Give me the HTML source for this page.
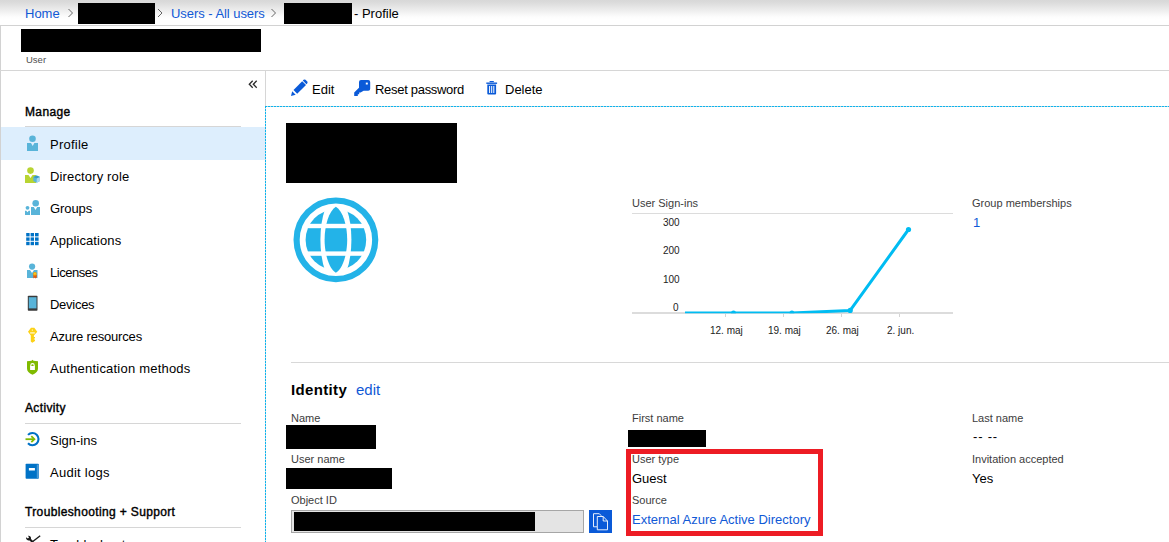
<!DOCTYPE html>
<html><head><meta charset="utf-8">
<style>
*{margin:0;padding:0;box-sizing:border-box}
html,body{width:1169px;height:542px;overflow:hidden;background:#fff;font-family:"Liberation Sans",sans-serif;color:#000}
.abs{position:absolute}
svg{position:absolute;overflow:visible}
.blk{position:absolute;background:#000}
.bc{position:absolute;top:0;left:0;width:1169px;height:25px;background:linear-gradient(#d8d8d8 0px,#dadada 2px,#fdfdfd 17px,#fff 20px)}
.t13{font-size:13px;white-space:nowrap;position:absolute;line-height:16px;color:#000}
.hl{position:absolute;height:1px;background:#d6d6d6}
.vl{position:absolute;width:1px;background:#d6d6d6}
.nav{position:absolute;left:50px;font-size:13px;line-height:16px;white-space:nowrap;color:#000}
.sec{position:absolute;left:25px;font-size:12px;font-weight:normal;-webkit-text-stroke:0.4px #000;letter-spacing:0.36px;line-height:16px;white-space:nowrap;color:#000}
.lbl{position:absolute;font-size:11px;line-height:14px;white-space:nowrap;color:#3c3c3c}
.val{position:absolute;font-size:13px;line-height:16px;white-space:nowrap;color:#000}
.ax{position:absolute;font-size:10px;line-height:12px;white-space:nowrap;color:#222}
.lk{color:#1059d6 !important}
</style></head><body>
<!-- breadcrumb -->
<div class="bc"></div>
<div class="hl" style="left:0;top:25px;width:1169px;background:#d2d2d2"></div>
<div class="t13 lk" style="left:25px;top:6px">Home</div>
<svg style="left:0;top:0" width="1" height="1"><path d="M68.5 9 L72.5 13 L68.5 17 M158 9 L162 13 L158 17 M271.5 9 L275.5 13 L271.5 17" fill="none" stroke="#555" stroke-width="0.9"/></svg>
<div class="blk" style="left:78px;top:3px;width:77px;height:21px"></div>
<div class="t13 lk" style="left:171px;top:6px;letter-spacing:-0.05px">Users - All users</div>
<div class="blk" style="left:284px;top:3px;width:68px;height:21px"></div>
<div class="t13" style="left:354px;top:6px">- Profile</div>

<!-- header -->
<div class="vl" style="left:0;top:25px;height:517px;background:#d2d2d2"></div>
<div class="blk" style="left:21px;top:29px;width:240px;height:23px"></div>
<div class="abs" style="left:26px;top:54px;font-size:9.5px;line-height:11px;color:#505050">User</div>
<div class="hl" style="left:0;top:70px;width:1169px"></div>

<!-- sidebar -->
<div class="vl" style="left:265px;top:70px;height:36px"></div>
<svg style="left:0;top:0" width="1" height="1"><path d="M252.7 80.8 L249.3 84.2 L252.7 87.7 M256.7 80.8 L253.3 84.2 L256.7 87.7" fill="none" stroke="#2a2a2a" stroke-width="1.3"/></svg>
<div class="sec" style="top:104px">Manage</div>
<div class="hl" style="left:25px;top:126px;width:216px"></div>
<div class="abs" style="left:1px;top:127px;width:264px;height:33px;background:#ddeefd"></div>
<!-- icons -->
<svg style="left:0;top:0" width="1" height="1">
 <!-- profile -->
 <circle cx="32.5" cy="138.8" r="3.3" fill="#59b4d9"/>
 <path d="M27 143 H31 L32.7 146 L34.4 143 H38 V151 H27 Z" fill="#59b4d9"/>
 <!-- directory role -->
 <circle cx="30.5" cy="170.6" r="3.3" fill="#b8d432"/>
 <path d="M25 175 H28.5 L30.5 178 L32.5 175 H36 V183 H25 Z" fill="#b8d432"/>
 <path d="M33.3 177 L36.7 175.5 L40 177 V181 L36.7 182.7 L33.3 181 Z" fill="#59b4d9"/>
 <path d="M33.3 177 L36.7 175.5 L40 177 L36.7 178.6 Z" fill="#3999c6"/>
 <path d="M36.7 178.6 L40 177 V181 L36.7 182.7 Z" fill="#a8d8f0"/>
 <!-- groups -->
 <circle cx="35.7" cy="203.2" r="3.3" fill="#59b4d9"/>
 <path d="M31 207 H33.8 L35.5 210 L37.2 207 H40 V215 H31 Z" fill="#59b4d9"/>
 <circle cx="27.5" cy="207.8" r="1.9" fill="#59b4d9"/>
 <path d="M25 210.8 H26.3 L27.5 212.3 L28.7 210.8 H30 V215 H25 Z" fill="#59b4d9"/>
 <!-- applications -->
 <g fill="#0072c6">
  <rect x="26.2" y="233" width="3.4" height="3.4"/><rect x="30.6" y="233" width="3.4" height="3.4"/><rect x="35" y="233" width="3.6" height="3.4"/>
  <rect x="26.2" y="237.4" width="3.4" height="3.4"/><rect x="30.6" y="237.4" width="3.4" height="3.4"/><rect x="35" y="237.4" width="3.6" height="3.4"/>
  <rect x="26.2" y="241.8" width="3.4" height="3.4"/><rect x="30.6" y="241.8" width="3.4" height="3.4"/><rect x="35" y="241.8" width="3.6" height="3.4"/>
 </g>
 <!-- licenses -->
 <circle cx="32.1" cy="266.6" r="3.1" fill="#59b4d9"/>
 <path d="M27 270 H30 L32 273 L34 270 H37.5 V278 H27 Z" fill="#59b4d9"/>
 <path d="M33.3 275 L33.3 278.5 L34.6 277.5 L35.6 278.5 L36.8 277.5 V275 Z" fill="#e8590c"/>
 <circle cx="34.9" cy="273.8" r="1.9" fill="#f5a000"/>
 <circle cx="34.9" cy="273.8" r="1" fill="#ffc820"/>
 <!-- devices -->
 <rect x="27.8" y="295.8" width="9.7" height="15" rx="0.8" fill="#3a3a3a"/>
 <rect x="28.8" y="297.2" width="7.7" height="11.2" fill="#59b4d9"/>
 <!-- azure resources key -->
 <path d="M31 327.8 H34.3 L37.3 331.8 L33.9 335.5 V337 H35 V338.5 H33.9 V339.5 H35 V341 L32.3 342.8 L30.8 341.5 V335.5 L28 331.8 Z" fill="#fcd116"/>
 <rect x="30.1" y="332.2" width="4.7" height="1.4" fill="#fff6c0"/>
 <rect x="31.8" y="329.4" width="1" height="1.4" fill="#fff6c0"/>
 <!-- auth methods shield -->
 <path d="M32.5 359.8 L33.5 360.8 L38 361.3 V368.5 Q38 372.5 32.5 374.8 Q27 372.5 27 368.5 V361.3 L31.5 360.8 Z" fill="#7fba00"/>
 <rect x="30.1" y="366" width="4.8" height="4" fill="#fff"/>
 <path d="M30.8 366.5 V365.2 Q30.8 363.6 32.5 363.6 Q34.2 363.6 34.2 365.2 V366.5" fill="none" stroke="#fff" stroke-width="1.1"/>
 <!-- sign-ins -->
 <path d="M28 434.9 A6.1 6.1 0 1 1 28 443.3" fill="none" stroke="#0072c6" stroke-width="2.1"/>
 <path d="M25.5 439.2 H34" stroke="#7fba00" stroke-width="1.8" fill="none"/>
 <path d="M31.3 436.2 L34.4 439.2 L31.3 442.2" stroke="#7fba00" stroke-width="1.8" fill="none"/>
 <!-- audit logs -->
 <rect x="25.6" y="463.8" width="13.2" height="15" rx="0.8" fill="#0072c6"/>
 <rect x="36.8" y="464.6" width="2" height="13.6" fill="#4a9ad6"/>
 <rect x="28.9" y="468" width="6" height="2.5" fill="#fff"/>
 <!-- troubleshoot wrench -->
 <path d="M31.5 542.5 L40.2 535.8" stroke="#1a1a1a" stroke-width="1.4"/>
 <path d="M26.2 537.2 A2.6 2.6 0 0 0 29.6 540.4 L32 543 L33.6 541.6 L31 539 A2.6 2.6 0 0 0 28 535.8 L29 537.6 L27.9 538.5 Z" fill="#1a1a1a"/>
</svg>
<div class="nav" style="top:137px;letter-spacing:0.23px">Profile</div>
<div class="nav" style="top:169px;letter-spacing:0.15px">Directory role</div>
<div class="nav" style="top:201px;letter-spacing:-0.08px">Groups</div>
<div class="nav" style="top:233px;letter-spacing:0.1px">Applications</div>
<div class="nav" style="top:265px;letter-spacing:-0.47px">Licenses</div>
<div class="nav" style="top:297px;letter-spacing:-0.27px">Devices</div>
<div class="nav" style="top:329px;letter-spacing:-0.18px">Azure resources</div>
<div class="nav" style="top:361px;letter-spacing:0.21px">Authentication methods</div>
<div class="sec" style="top:400px">Activity</div>
<div class="hl" style="left:25px;top:423px;width:216px"></div>
<div class="nav" style="top:433px">Sign-ins</div>
<div class="nav" style="top:465px;letter-spacing:0.27px">Audit logs</div>
<div class="sec" style="top:504px">Troubleshooting + Support</div>
<div class="hl" style="left:25px;top:527px;width:216px"></div>
<div class="nav" style="top:537px">Troubleshoot</div>

<!-- content frame dotted -->
<div class="abs" style="left:265px;top:106px;width:904px;height:1px;background:repeating-linear-gradient(90deg,#0db4ee 0 2px,#bcd3da 2px 3px)"></div>
<div class="abs" style="left:265px;top:106px;width:1px;height:436px;background:repeating-linear-gradient(180deg,#0db4ee 0 2px,#c6d8de 2px 3px)"></div>

<!-- toolbar -->
<svg style="left:0;top:0" width="1" height="1">
 <!-- pencil -->
 <path d="M291 96 L292.2 91.3 L295.7 94.8 Z" fill="#0a5ad8"/>
 <path d="M293.5 89.9 L302.2 81.2 L306 85 L297.2 93.7 Z" fill="#0a5ad8"/>
 <path d="M303.6 79.8 Q304.6 79 305.5 79.8 L307.2 81.5 Q308 82.4 307.2 83.4 L306.4 84.2 L302.8 80.6 Z" fill="#0a5ad8"/>
 <!-- key -->
 <path d="M361 80 H368.2 Q370.2 80 370.2 82 V88.8 Q370.2 90.8 368.2 90.8 H363.6 L360.6 92.6 H359.2 V94.2 H357.8 V95.9 H354.2 V92.6 L359 87.7 V82 Q359 80 361 80 Z" fill="#0a5ad8"/>
 <rect x="365.8" y="82.6" width="2" height="1.9" fill="#fff"/>
 <!-- trash -->
 <rect x="486.3" y="82.5" width="10.8" height="1.4" fill="#0a5ad8"/>
 <rect x="489.6" y="81" width="4.2" height="1.2" fill="#0a5ad8"/>
 <path d="M487.3 84.6 H496.1 V93.6 Q496.1 94.6 495.1 94.6 H488.3 Q487.3 94.6 487.3 93.6 Z" fill="#0a5ad8"/>
 <rect x="489.1" y="86" width="1" height="7" fill="#fff"/>
 <rect x="491.2" y="86" width="1" height="7" fill="#fff"/>
 <rect x="493.3" y="86" width="1" height="7" fill="#fff"/>
</svg>
<div class="t13" style="left:312px;top:82px">Edit</div>
<div class="t13" style="left:375px;top:82px;letter-spacing:-0.3px">Reset password</div>
<div class="t13" style="left:505px;top:82px">Delete</div>

<!-- profile -->
<div class="blk" style="left:286px;top:123px;width:171px;height:60px"></div>
<svg style="left:0;top:0" width="1" height="1">
 <circle cx="335.9" cy="239.8" r="30.3" fill="#23b3e8"/>
 <ellipse cx="335.9" cy="239.8" rx="15.5" ry="43" fill="#fff"/>
 <path d="M335.90,206.80 C342.90,210.80 347.20,225.80 347.20,239.80 C347.20,253.80 342.90,268.80 335.90,272.80 C328.90,268.80 324.60,253.80 324.60,239.80 C324.60,225.80 328.90,210.80 335.90,206.80 Z" fill="#23b3e8"/>
 <rect x="300" y="223.8" width="72" height="4.4" fill="#fff"/>
 <rect x="300" y="251.4" width="72" height="4.4" fill="#fff"/>
 <circle cx="335.9" cy="239.8" r="39.3" fill="none" stroke="#23b3e8" stroke-width="6.2"/>
</svg>

<!-- chart -->
<div class="lbl" style="left:632px;top:196px">User Sign-ins</div>
<div class="hl" style="left:632px;top:213px;width:321px;background:#dcdcdc"></div>
<div class="ax" style="left:663px;top:217px">300</div>
<div class="ax" style="left:663px;top:245px">200</div>
<div class="ax" style="left:663px;top:274px">100</div>
<div class="ax" style="left:673px;top:302px">0</div>
<div class="hl" style="left:632px;top:312px;width:321px;height:2px;background:#dcdcdc"></div>
<svg style="left:0;top:0" width="1" height="1">
 <defs><clipPath id="cc"><rect x="600" y="200" width="400" height="113.3"/></clipPath></defs>
 <path d="M725.5 314 V317 M783.5 314 V317 M841.5 314 V317 M899.5 314 V317" stroke="#d4d4d4" stroke-width="1"/>
 <g clip-path="url(#cc)">
 <polyline points="685,313 733.5,313 791.7,313 850.2,310.4 908.5,229.5" fill="none" stroke="#00bcf2" stroke-width="3" stroke-linejoin="round"/>
 <circle cx="733.5" cy="313" r="2.5" fill="#00bcf2"/>
 <circle cx="791.9" cy="313" r="2.5" fill="#00bcf2"/>
 <circle cx="850.2" cy="310.4" r="2.6" fill="#00bcf2"/>
 <circle cx="908.5" cy="229.5" r="2.6" fill="#00bcf2"/>
 </g>
</svg>
<div class="ax" style="left:710px;top:325px">12. maj</div>
<div class="ax" style="left:768px;top:325px">19. maj</div>
<div class="ax" style="left:826px;top:325px">26. maj</div>
<div class="ax" style="left:887px;top:325px">2. jun.</div>

<div class="lbl" style="left:972px;top:196px">Group memberships</div>
<div class="val lk" style="left:973px;top:215px">1</div>

<div class="hl" style="left:291px;top:362px;width:878px;background:#d8d8d8"></div>
<div class="abs" style="left:291px;top:381px;font-size:15px;font-weight:bold;line-height:18px;white-space:nowrap;letter-spacing:0.35px">Identity</div>
<div class="val lk" style="left:356px;top:381px;font-size:15px;line-height:18px">edit</div>

<div class="lbl" style="left:291px;top:411px">Name</div>
<div class="blk" style="left:286px;top:425px;width:90px;height:24px"></div>
<div class="lbl" style="left:291px;top:452px">User name</div>
<div class="blk" style="left:286px;top:468px;width:106px;height:21px"></div>
<div class="lbl" style="left:291px;top:493px">Object ID</div>
<div class="abs" style="left:291px;top:510px;width:293px;height:23px;background:#e4e4e4;border:1px solid #a6a6a6"></div>
<div class="blk" style="left:294px;top:512px;width:241px;height:19px"></div>
<div class="abs" style="left:589px;top:510px;width:23px;height:23px;background:#0a5ad8"></div>
<svg style="left:0;top:0" width="1" height="1">
 <path d="M597 526.8 H593.5 V513.7 H599.3 L601.3 515.8" fill="none" stroke="#fff" stroke-width="0.9"/>
 <path d="M597.3 516.5 H603.2 L607.5 521 V529.8 H597.3 Z" fill="none" stroke="#fff" stroke-width="0.9"/>
 <path d="M603.2 516.5 V521 H607.5" fill="none" stroke="#fff" stroke-width="0.9"/>
</svg>

<div class="lbl" style="left:632px;top:411px">First name</div>
<div class="blk" style="left:628px;top:430px;width:78px;height:17px"></div>
<div class="lbl" style="left:632px;top:452px">User type</div>
<div class="val" style="left:632px;top:471px">Guest</div>
<div class="lbl" style="left:632px;top:493px">Source</div>
<div class="val lk" style="left:632px;top:512px">External Azure Active Directory</div>

<div class="lbl" style="left:972px;top:411px">Last name</div>
<div class="val" style="left:973px;top:429px;letter-spacing:0.8px">-- --</div>
<div class="lbl" style="left:972px;top:452px">Invitation accepted</div>
<div class="val" style="left:972px;top:471px">Yes</div>

<!-- red highlight -->
<div class="abs" style="left:626px;top:449px;width:197px;height:87px;border:5px solid #ed1c24"></div>

</body></html>
